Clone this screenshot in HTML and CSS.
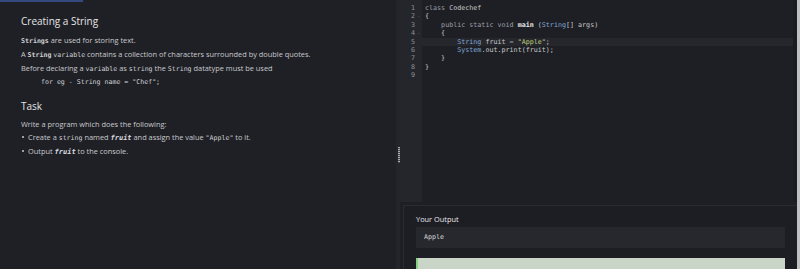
FILE: index.html
```html
<!DOCTYPE html>
<html lang="en">
<head>
<meta charset="utf-8">
<title>Creating a String</title>
<link rel="stylesheet" href="styles.css">
</head>
<body>
<div class="app">
  <section class="problem">
    <div class="progress"></div>
    <div class="content">
      <h2 class="title">Creating a String</h2>
      <p class="text lead"><code class="b">Strings</code> are used for storing text.</p>
      <p class="text">A <code class="b">String</code> <code>variable</code> contains a collection of characters surrounded by double quotes.</p>
      <p class="text">Before declaring a <code>variable</code> as <code>string</code> the <code>String</code> datatype must be used</p>
      <p class="text indent"><code>for eg - String name = "Chef";</code></p>
      <h2 class="title task">Task</h2>
      <p class="text task-lead">Write a program which does the following:</p>
      <ul class="list">
        <li>Create a <code>string</code> named <code class="bi">fruit</code> and assign the value <code>"Apple"</code> to it.</li>
        <li>Output <code class="bi">fruit</code> to the console.</li>
      </ul>
    </div>
  </section>
  <div class="splitter"><span class="grip"></span></div>
  <section class="workspace">
    <div class="editor">
      <div class="gutter">
        <div class="ln"><span>1</span><i></i></div>
        <div class="ln"><span>2</span><i>-</i></div>
        <div class="ln"><span>3</span><i></i></div>
        <div class="ln"><span>4</span><i>-</i></div>
        <div class="ln"><span>5</span><i></i></div>
        <div class="ln"><span>6</span><i></i></div>
        <div class="ln"><span>7</span><i></i></div>
        <div class="ln"><span>8</span><i></i></div>
        <div class="ln"><span>9</span><i></i></div>
      </div>
      <div class="code">
<div class="cl"><span class="kw">class</span> Codechef</div>
<div class="cl">{</div>
<div class="cl">    <span class="kw">public static void</span> <span class="fn">main</span> (<span class="ty">String</span>[] args)</div>
<div class="cl">    {</div>
<div class="cl active">        <span class="ty">String</span> fruit <span class="op">=</span> <span class="st">"Apple"</span>;</div>
<div class="cl">        <span class="ty">System</span>.out.print(fruit);</div>
<div class="cl">    }</div>
<div class="cl">}</div>
<div class="cl"> </div>
      </div>
      <div class="vtrack"></div>
    </div>
    <div class="output-panel">
      <h3 class="out-title">Your Output</h3>
      <pre class="out-box">Apple</pre>
      <div class="result"></div>
    </div>
  </section>
  <div class="pagebar"></div>
</div>
</body>
</html>
```

FILE: styles.css
```css
html, body {
  margin: 0;
  padding: 0;
  background: #1f2026;
  overflow: hidden;
}

.app {
  display: flex;
  width: 800px;
  height: 269px;
  font-family: "Open Sans", "Noto Sans", sans-serif;
  color: #c9cacd;
}

.problem {
  width: 396px;
  flex: none;
  background: #1f2026;
}

.progress {
  width: 83px;
  height: 2px;
  background: #34497f;
}

.content {
  padding: 12px 0 0 21px;
}

code {
  font-family: "DejaVu Sans Mono", monospace;
  font-size: 6.6px;
  line-height: 1;
  color: #cfd0d3;
}

code.b {
  font-weight: bold;
}

code.bi {
  font-weight: bold;
  font-style: italic;
  font-size: 7px;
  color: #dcdde0;
}

.title {
  margin: 0;
  font-size: 10px;
  line-height: 14px;
  font-weight: 400;
  color: #e4e5e7;
}

.task {
  margin-top: 10px;
}

.text {
  margin: 0;
  font-size: 7.4px;
  line-height: 13.7px;
}

.lead {
  margin-top: 6.2px;
}

.task-lead {
  margin-top: 4.5px;
}

.indent {
  padding-left: 20px;
}

.list {
  list-style: none;
  margin: -1px 0 0 0;
  padding: 0;
  font-size: 7.4px;
  line-height: 14px;
}

.list li {
  position: relative;
  height: 14px;
  padding-left: 7px;
}

.list li::before {
  content: "";
  position: absolute;
  left: 1px;
  top: 6px;
  width: 2px;
  height: 2px;
  border-radius: 50%;
  background: #c9cacd;
}

.splitter {
  width: 4px;
  flex: none;
  background: #24252b;
  display: flex;
  align-items: flex-start;
  justify-content: flex-end;
  padding-top: 147px;
  box-sizing: border-box;
}

.grip {
  width: 2px;
  height: 16px;
  background: repeating-linear-gradient(to bottom, #a9abb0 0 1px, #4a4c52 1px 2px);
}

.workspace {
  flex: 1;
  display: flex;
  flex-direction: column;
  background: #1e1f24;
}

.editor {
  height: 202px;
  display: flex;
  font-family: "DejaVu Sans Mono", monospace;
  font-size: 6.7px;
  line-height: 8.4px;
}

.gutter {
  width: 22px;
  flex: none;
  background: #25262c;
  padding-top: 4px;
  color: #8f9197;
}

.ln {
  display: flex;
  justify-content: flex-end;
}

.ln i {
  width: 7px;
  font-style: normal;
  font-size: 5px;
  color: #6b6d73;
  text-align: center;
}

.code {
  flex: 1;
  padding-top: 4px;
  color: #c6c7ca;
}

.cl {
  white-space: pre;
  padding-left: 3px;
  height: 8.4px;
}

.cl.active {
  background: #26272d;
}

.kw { color: #9a9ea6; }
.fn { color: #e8e8ea; font-weight: bold; }
.ty { color: #7fa6d6; }
.op { color: #9a9ea6; }
.st { color: #bccb7c; }

.vtrack {
  width: 4px;
  flex: none;
  background: #1b1c20;
}

.output-panel {
  margin: 3px 0 0 3px;
  flex: 1;
  background: #1d1e24;
  border-top: 1px solid #2a2b31;
  border-left: 1px solid #2a2b31;
  padding: 0 12px 0 12px;
  overflow: hidden;
}

.out-title {
  margin: 7px 0 0 0;
  font-size: 7.4px;
  line-height: 12px;
  font-weight: 500;
  color: #e8e9eb;
}

.out-box {
  margin: 2px 0 0 0;
  height: 21px;
  box-sizing: border-box;
  padding: 6px 0 0 8px;
  background: #27282d;
  font-family: "DejaVu Sans Mono", monospace;
  font-size: 6.7px;
  line-height: 9px;
  color: #d6d7da;
}

.result {
  margin-top: 10px;
  height: 30px;
  background: #c9d5c6;
  border-left: 2px solid #84d27e;
}

.pagebar {
  width: 3px;
  flex: none;
  background: #bfc0c3;
}
```
